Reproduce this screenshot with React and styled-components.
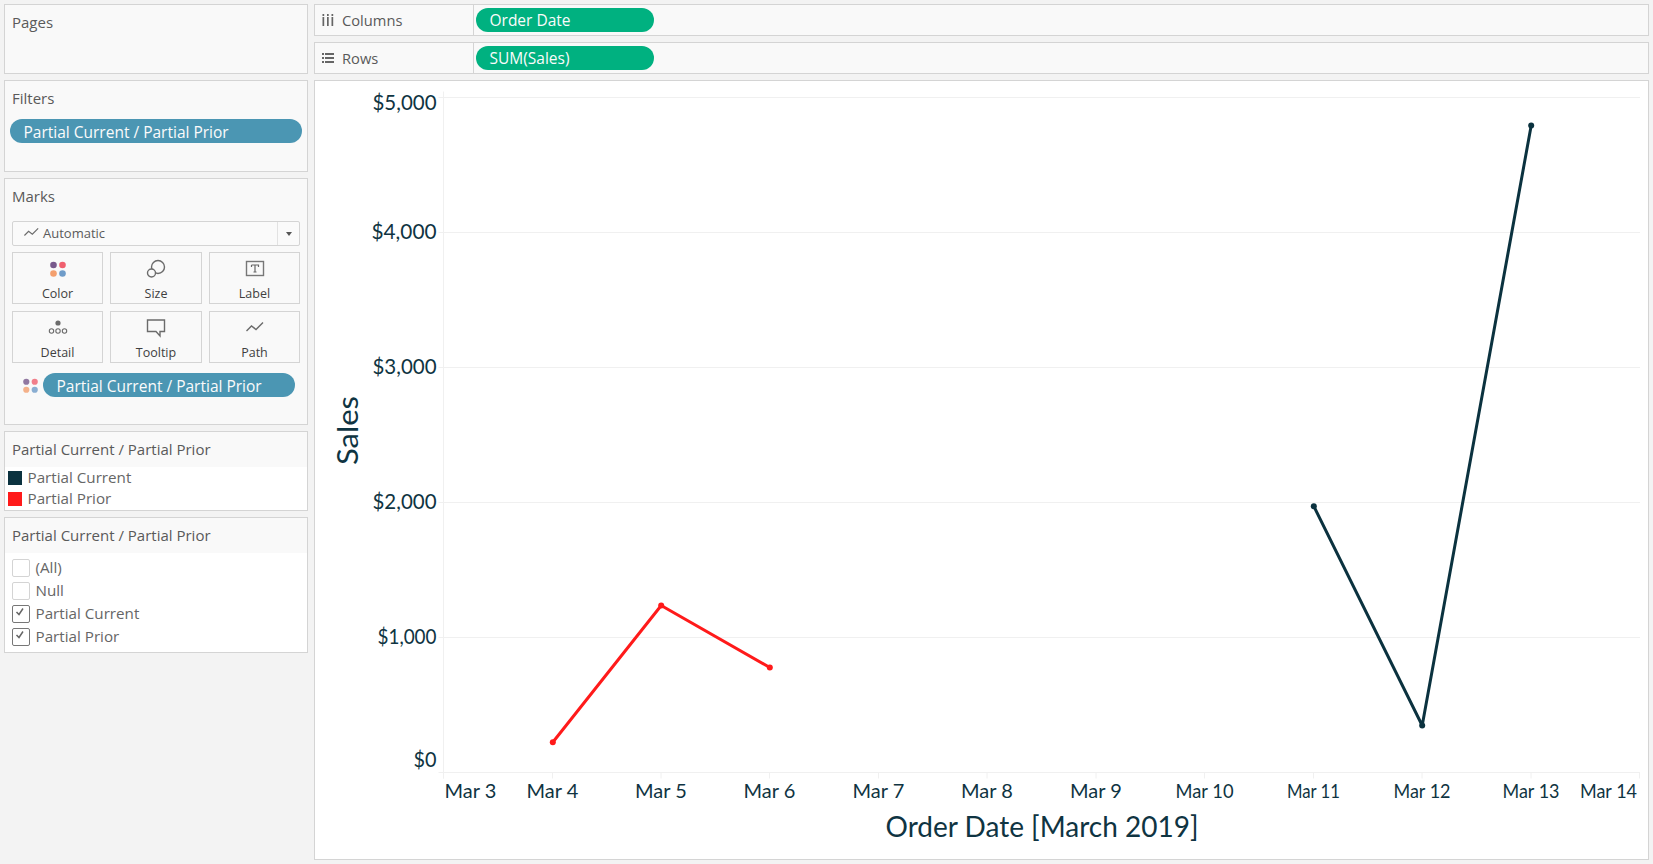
import React from "react";
import styled, { createGlobalStyle } from "styled-components";

const GlobalStyle = createGlobalStyle`
  * { box-sizing: border-box; }
  html, body { margin: 0; height: 100%; background: #f3f3f3; }
  body { font-family: "Open Sans", "Liberation Sans", sans-serif; color: #555; overflow: hidden; }
`;

const Page = styled.div`
  display: grid;
  grid-template-columns: 304px 1335px;
  column-gap: 6px;
  padding: 4px;
  height: 864px;
  background: #f3f3f3;
`;

const Sidebar = styled.div`
  display: flex;
  flex-direction: column;
`;

const Card = styled.section`
  height: ${(p) => p.$h}px;
  margin-bottom: 6px;
  background: #f9f9f9;
  border: 1px solid #d4d4d4;
`;

const CardTitle = styled.div`
  height: ${(p) => p.$h || 35}px;
  padding: 7px 0 0 7px;
  font-size: 15px;
  line-height: 20px;
  color: #5a5a5a;
`;

const Pill = styled.div`
  display: flex;
  align-items: center;
  height: 24px;
  padding-left: 13.5px;
  border-radius: 12px;
  font-size: 15.5px;
  color: #fbfbfb;
  background: ${(p) => p.$color};
  width: ${(p) => p.$w}px;
`;

const FieldPill = styled(Pill)`
  padding-top: 2px;
`;

const FilterPill = styled(FieldPill)`
  margin-left: 5px;
`;

const Select = styled.div`
  display: flex;
  align-items: center;
  height: 25px;
  width: 288px;
  margin-left: 7px;
  background: #fafafa;
  border: 1px solid #d4d4d4;
  border-radius: 2px;
`;

const SelectLabel = styled.div`
  flex: 1;
  display: flex;
  align-items: center;
  gap: 4px;
  padding: 0 0 2px 11px;
  font-size: 13px;
  color: #5a5a5a;
`;

const SelectArrow = styled.div`
  width: 22px;
  height: 100%;
  display: flex;
  align-items: center;
  justify-content: center;
  border-left: 1px solid #e2e2e2;

  &::after {
    content: "";
    border-left: 3.5px solid transparent;
    border-right: 3.5px solid transparent;
    border-top: 4px solid #555;
  }
`;

const MarkGrid = styled.div`
  display: grid;
  grid-template-columns: 91px 92px 91px;
  grid-auto-rows: 52px;
  gap: 7px 7px;
  margin: 6px 0 0 7px;
`;

const MarkButton = styled.div`
  display: flex;
  flex-direction: column;
  align-items: center;
  padding-top: 6px;
  border: 1px solid #d4d4d4;
  font-size: 12.5px;
  line-height: 16px;
  color: #3f3f3f;

  svg {
    display: block;
    height: 20px;
    margin-bottom: 7px;
  }
`;

const EncodingRow = styled.div`
  display: flex;
  align-items: center;
  gap: 5px;
  margin: 10px 0 0 18px;

  svg {
    flex: none;
  }
`;

const CardBody = styled.div`
  background: #fff;
  height: ${(p) => p.$h}px;
  padding-top: ${(p) => p.$pad || 0}px;
`;

const LegendRow = styled.div`
  display: flex;
  align-items: center;
  gap: 5.5px;
  height: 21px;
  padding-left: 3px;
  font-size: 15.2px;
  color: #666;
`;

const Swatch = styled.span`
  width: 14px;
  height: 14px;
  background: ${(p) => p.$color};
`;

const CheckRow = styled.div`
  display: flex;
  align-items: center;
  gap: 5.5px;
  height: 23px;
  padding-left: 7px;
  font-size: 15.2px;
  color: #666;
`;

const RowText = styled.span`
  margin-bottom: 2px;
`;

const Box = styled.span`
  display: flex;
  width: 18px;
  height: 18px;
  padding: 1px 0 0 1px;
  background: #fff;
  border: 1px solid ${(p) => (p.$on ? "#777" : "#d4d4d4")};
  border-radius: 2px;
`;

const Main = styled.div`
  display: flex;
  flex-direction: column;
`;

const Shelf = styled.div`
  display: flex;
  align-items: center;
  height: 32px;
  margin-bottom: 6px;
  background: #f9f9f9;
  border: 1px solid #d4d4d4;
`;

const ShelfLabel = styled.div`
  display: flex;
  align-items: center;
  gap: 8px;
  width: 159px;
  height: 100%;
  padding-left: 7px;
  border-right: 1px solid #d4d4d4;
  font-size: 14.7px;
  color: #5a5a5a;
`;

const ShelfPill = styled(Pill)`
  margin-left: 2px;
`;

const ChartPanel = styled.div`
  width: 1335px;
  height: 780px;
  background: #fff;
  border: 1px solid #d4d4d4;
`;

const ChartSvg = styled.svg`
  display: block;
  text {
    font-family: Lato, "Open Sans", sans-serif;
    fill: #0f3442;
  }
`;

const YEARS = [
  { label: "$5,000", grid: 97, base: 109.5, w: 64 },
  { label: "$4,000", grid: 232, base: 238.5, w: 65 },
  { label: "$3,000", grid: 367, base: 373.5, w: 64 },
  { label: "$2,000", grid: 502, base: 508.5, w: 64 },
  { label: "$1,000", grid: 637, base: 643.5, w: 59 },
  { label: "$0", grid: 772, base: 766.5, w: 23 },
];

const TICKS = [
  { label: "Mar 3", x: 443, text: 470 },
  { label: "Mar 4", x: 552 },
  { label: "Mar 5", x: 660.5 },
  { label: "Mar 6", x: 769 },
  { label: "Mar 7", x: 878 },
  { label: "Mar 8", x: 986.5 },
  { label: "Mar 9", x: 1095.5 },
  { label: "Mar 10", x: 1204, w: 58 },
  { label: "Mar 11", x: 1313, w: 53 },
  { label: "Mar 12", x: 1421.5, w: 57 },
  { label: "Mar 13", x: 1530.5, w: 57 },
  { label: "Mar 14", x: 1639, text: 1608, w: 57 },
];

const SERIES = [
  { color: "#ff1a1a", pts: [[552.3, 741.7], [660.7, 605], [769.3, 667]] },
  { color: "#0b323f", pts: [[1313.3, 505.7], [1421.7, 725], [1530.7, 125]] },
];

const ColorDots = ({ size = 16, faded }) => (
  <svg width={size} height={size} viewBox="0 0 16 16" opacity={faded ? 0.8 : 1}>
    <circle cx="3.5" cy="4" r="3.3" fill="#78598c" />
    <circle cx="12.5" cy="4" r="3.3" fill="#f0606f" />
    <circle cx="3.5" cy="12.5" r="3.3" fill="#f4a06f" />
    <circle cx="12.5" cy="12.5" r="3.3" fill="#6f9cc9" />
  </svg>
);

const SizeIcon = () => (
  <svg width="20" height="20" viewBox="0 0 20 20" fill="none" stroke="#6b6b6b" strokeWidth="1.4">
    <circle cx="12" cy="8" r="6.5" />
    <circle cx="5.5" cy="14" r="4" fill="#f9f9f9" />
  </svg>
);

const LabelIcon = () => (
  <svg width="20" height="20" viewBox="0 0 20 20">
    <rect x="1.5" y="2.5" width="17" height="14" fill="none" stroke="#777" strokeWidth="1.4" />
    <path d="M6.5 6h7v2M10 6v7M8.5 13h3M6.5 6v2" fill="none" stroke="#666" strokeWidth="1.2" />
  </svg>
);

const DetailIcon = () => (
  <svg width="20" height="20" viewBox="0 0 20 20" fill="none" stroke="#6b6b6b" strokeWidth="1.1">
    <circle cx="10" cy="5" r="2.6" fill="#6b6b6b" stroke="none" />
    <circle cx="3.5" cy="13" r="2.2" />
    <circle cx="10" cy="13" r="2.2" />
    <circle cx="16.5" cy="13" r="2.2" />
  </svg>
);

const TooltipIcon = () => (
  <svg width="20" height="20" viewBox="0 0 20 20" fill="none" stroke="#6b6b6b" strokeWidth="1.4">
    <path d="M1.5 2h17v11.5h-4.5v4.5l-4-4.5h-8.5z" />
  </svg>
);

const PathIcon = ({ w = 18 }) => (
  <svg width={w} height="20" viewBox="0 0 18 20" fill="none" stroke="#6b6b6b" strokeWidth="1.4">
    <path d="M0.5 13l5-5 4.5 3.5 7-7" />
  </svg>
);

const ColumnsIcon = () => (
  <svg width="12" height="14" viewBox="0 0 12 14" fill="#666">
    <rect x="0.5" y="4" width="1.7" height="9" />
    <rect x="5" y="4" width="1.7" height="9" />
    <rect x="9.5" y="4" width="1.7" height="9" />
    <rect x="0.5" y="1" width="1.7" height="2" />
    <rect x="5" y="1" width="1.7" height="2" />
    <rect x="9.5" y="1" width="1.7" height="2" />
  </svg>
);

const RowsIcon = () => (
  <svg width="12" height="12" viewBox="0 0 12 12" fill="#666">
    <rect x="0" y="1" width="2" height="2" />
    <rect x="0" y="5" width="2" height="2" />
    <rect x="0" y="9" width="2" height="2" />
    <rect x="3" y="1" width="9" height="2" />
    <rect x="3" y="5" width="9" height="2" />
    <rect x="3" y="9" width="9" height="2" />
  </svg>
);

const Check = () => (
  <svg width="12" height="10" viewBox="0 0 12 10" fill="none" stroke="#666" strokeWidth="1.5">
    <path d="M2.5 5l2.5 2.5 4-6" />
  </svg>
);

const MARK_BUTTONS = [
  { label: "Color", icon: <ColorDots /> },
  { label: "Size", icon: <SizeIcon /> },
  { label: "Label", icon: <LabelIcon /> },
  { label: "Detail", icon: <DetailIcon /> },
  { label: "Tooltip", icon: <TooltipIcon /> },
  { label: "Path", icon: <PathIcon /> },
];

const FILTER_ITEMS = [
  { label: "(All)" },
  { label: "Null" },
  { label: "Partial Current", on: true },
  { label: "Partial Prior", on: true },
];

const FIELD = "Partial Current / Partial Prior";

const App = () => {
  return (
    <Page>
      <GlobalStyle />
      <Sidebar>
        <Card $h={70}>
          <CardTitle>Pages</CardTitle>
        </Card>
        <Card $h={92}>
          <CardTitle $h={38}>Filters</CardTitle>
          <FilterPill $color="#4b96b3" $w={292}>{FIELD}</FilterPill>
        </Card>
        <Card $h={247}>
          <CardTitle $h={42}>Marks</CardTitle>
          <Select>
            <SelectLabel>
              <PathIcon w={15} />
              Automatic
            </SelectLabel>
            <SelectArrow />
          </Select>
          <MarkGrid>
            {MARK_BUTTONS.map((b) => (
              <MarkButton key={b.label}>
                {b.icon}
                {b.label}
              </MarkButton>
            ))}
          </MarkGrid>
          <EncodingRow>
            <ColorDots size={15} faded />
            <FieldPill $color="#4b96b3" $w={252}>{FIELD}</FieldPill>
          </EncodingRow>
        </Card>
        <Card $h={80}>
          <CardTitle>{FIELD}</CardTitle>
          <CardBody $h={43}>
            <LegendRow>
              <Swatch $color="#0b323f" />
              <RowText>Partial Current</RowText>
            </LegendRow>
            <LegendRow>
              <Swatch $color="#ff1a1a" />
              <RowText>Partial Prior</RowText>
            </LegendRow>
          </CardBody>
        </Card>
        <Card $h={136}>
          <CardTitle>{FIELD}</CardTitle>
          <CardBody $h={99} $pad={3}>
            {FILTER_ITEMS.map((item) => (
              <CheckRow key={item.label}>
                <Box $on={item.on}>{item.on && <Check />}</Box>
                <RowText>{item.label}</RowText>
              </CheckRow>
            ))}
          </CardBody>
        </Card>
      </Sidebar>
      <Main>
        <Shelf>
          <ShelfLabel>
            <ColumnsIcon />
            Columns
          </ShelfLabel>
          <ShelfPill $color="#00b180" $w={178}>Order Date</ShelfPill>
        </Shelf>
        <Shelf>
          <ShelfLabel>
            <RowsIcon />
            Rows
          </ShelfLabel>
          <ShelfPill $color="#00b180" $w={178}>SUM(Sales)</ShelfPill>
        </Shelf>
        <ChartPanel>
          {/* viewBox is in page pixels, half a pixel off so 1px lines land on the grid */}
          <ChartSvg width="1333" height="778" viewBox="314.5 80.5 1333 778">
            {YEARS.map((y) => (
              <g key={y.label}>
                <line x1="438" x2="1639.5" y1={y.grid} y2={y.grid} stroke="#f0f0f0" strokeWidth="1" />
                <text x="436" y={y.base} fontSize="21" textAnchor="end" textLength={y.w} lengthAdjust="spacingAndGlyphs">
                  {y.label}
                </text>
              </g>
            ))}
            <line x1="443" x2="443" y1="91" y2="778" stroke="#f0f0f0" strokeWidth="1" />
            {TICKS.map((t) => (
              <g key={t.label}>
                <line x1={t.x} x2={t.x} y1="772" y2="778" stroke="#f0f0f0" strokeWidth="1" />
                <text
                  x={t.text || t.x}
                  y="797"
                  fontSize="20"
                  textAnchor="middle"
                  textLength={t.w}
                  lengthAdjust={t.w ? "spacingAndGlyphs" : undefined}
                >
                  {t.label}
                </text>
              </g>
            ))}
            {SERIES.map((s) => (
              <g key={s.color}>
                <polyline
                  points={s.pts.map((p) => p.join(",")).join(" ")}
                  fill="none"
                  stroke={s.color}
                  strokeWidth="3"
                  strokeLinejoin="round"
                />
                {s.pts.map((p) => (
                  <circle key={p[0]} cx={p[0]} cy={p[1]} r="3" fill={s.color} />
                ))}
              </g>
            ))}
            <text x="1041.5" y="836.5" fontSize="28" textAnchor="middle">Order Date [March 2019]</text>
            <text
              x="0"
              y="0"
              fontSize="28"
              textAnchor="middle"
              textLength="69"
              lengthAdjust="spacingAndGlyphs"
              transform="translate(357.5 430) rotate(-90)"
            >
              Sales
            </text>
          </ChartSvg>
        </ChartPanel>
      </Main>
    </Page>
  );
};

export default App;
